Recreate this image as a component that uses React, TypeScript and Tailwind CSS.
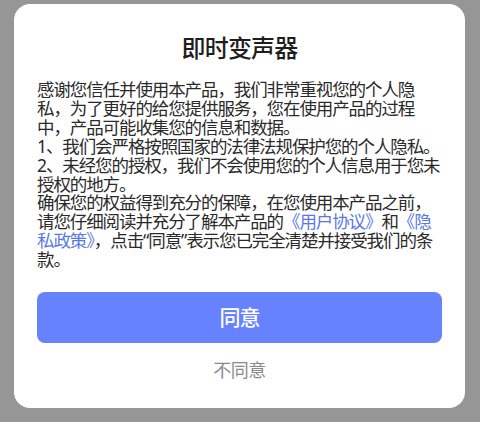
import React from "react";

const font = { fontFamily: '"Noto Sans", "Noto Sans CJK SC", sans-serif' };

export default function App() {
  return (
    <div className="h-[422px] w-[480px] bg-[#969696] pt-[4px] pl-[14px]" style={font}>
      <div className="w-[451px] rounded-[16px] bg-white px-[23px] pt-[29px] pb-[26px]">
        <h1 className="text-center text-[24px] leading-[30px] font-medium tracking-[-0.8px] text-[#1e1e1e]">即时变声器</h1>
        <div className="mt-[17px] text-[17.5px] leading-[18.9px] tracking-[-1.1px] text-[#2a2a2a]">
          <p>感谢您信任并使用本产品，我们非常重视您的个人隐私，为了更好的给您提供服务，您在使用产品的过程中，产品可能收集您的信息和数据。</p>
          <p>1、我们会严格按照国家的法律法规保护您的个人隐私。</p>
          <p>2、未经您的授权，我们不会使用您的个人信息用于您未授权的地方。</p>
          <p>
            确保您的权益得到充分的保障，在您使用本产品之前，请您仔细阅读并充分了解本产品的
            <span className="text-[#5a78e8]">《用户协议》</span>和
            <span className="text-[#5a78e8]">《隐私政策》</span>，点击“同意”表示您已完全清楚并接受我们的条款。
          </p>
        </div>
        <button className="mt-[23px] flex h-[51px] w-full items-center justify-center rounded-[8px] bg-[#6682ff] text-[21px] font-medium tracking-[-1px] text-white">
          同意
        </button>
        <div className="mt-[15px] text-center text-[18px] leading-[24px] tracking-[-0.5px] text-[#8a8a8a]">不同意</div>
      </div>
    </div>
  );
}
